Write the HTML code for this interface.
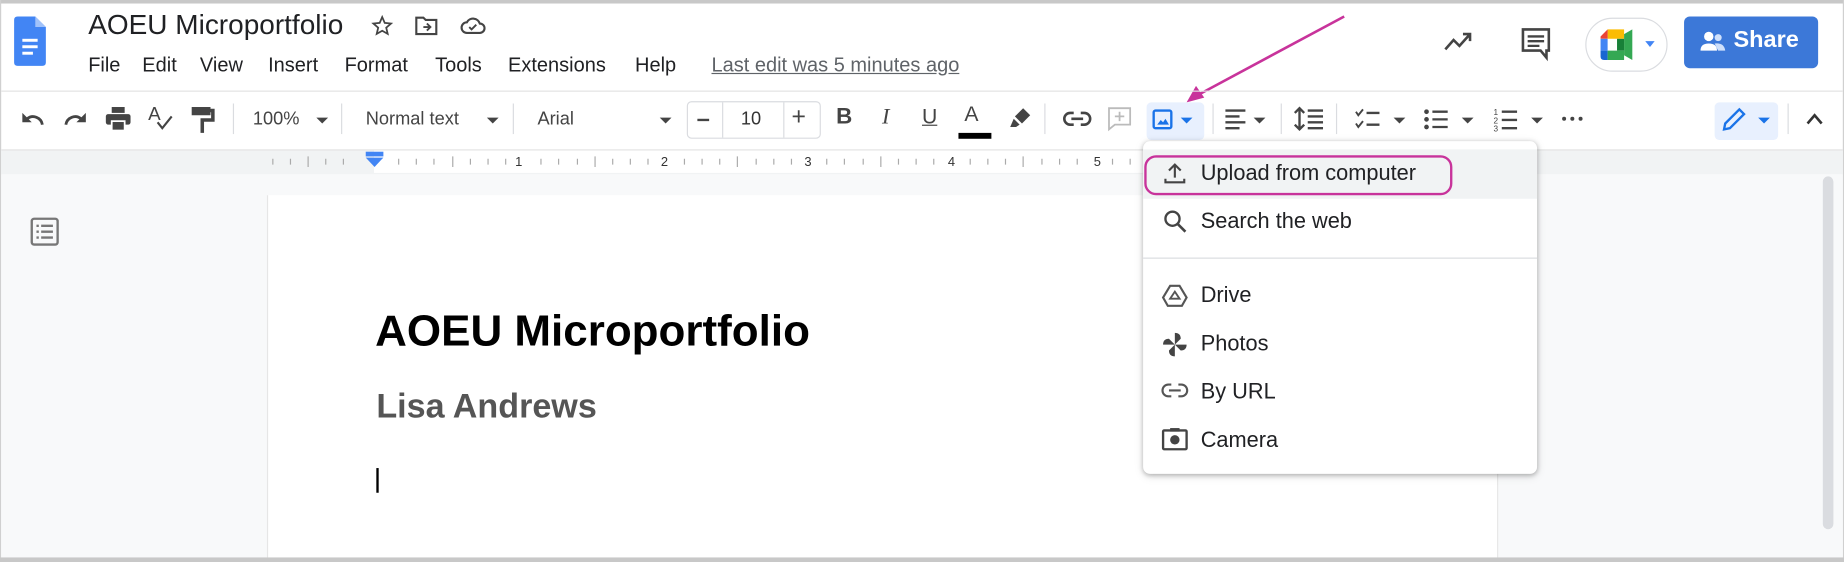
<!DOCTYPE html>
<html><head><meta charset="utf-8"><style>
html,body{margin:0;padding:0;width:1844px;height:562px;overflow:hidden;background:#fff}
#w{position:absolute;left:0;top:0;width:1568px;height:478px;transform:scale(1.17602);transform-origin:0 0;font-family:"Liberation Sans",Arial,sans-serif;color:#202124;background:#fff}
.a{position:absolute}
.t{position:absolute;white-space:nowrap}
.sep{position:absolute;top:88px;width:1px;height:26px;background:#dadce0}
.dd{position:absolute;width:0;height:0;border-left:5px solid transparent;border-right:5px solid transparent;border-top:5px solid #444}
.mi{position:absolute;left:1021px;font-size:18.5px;color:#202124;white-space:nowrap}
svg{position:absolute;overflow:visible}
.m{position:absolute;top:46px;font-size:17px;white-space:nowrap}
</style></head><body><div id="w">
<div class="a" style="left:0;top:0;width:1568px;height:3px;background:#c8c8c8"></div>
<div class="a" style="left:0;top:0;width:1px;height:478px;background:#d0d0d0"></div>
<div class="a" style="right:0;top:0;width:1px;height:478px;background:#d0d0d0"></div>
<svg style="left:12px;top:14px" width="27" height="42" viewBox="0 0 27 42"><path d="M3 0H18L27 9V39Q27 42 24 42H3Q0 42 0 39V3Q0 0 3 0Z" fill="#4285f4"/><path d="M18 0V9H27Z" fill="#a1c2fa"/><rect x="7" y="19" width="13" height="2.5" fill="#fff"/><rect x="7" y="24.5" width="13" height="2.5" fill="#fff"/><rect x="7" y="30" width="9" height="2.5" fill="#fff"/></svg>
<div class="t" style="left:75px;top:8px;font-size:23.8px">AOEU Microportfolio</div>
<svg style="left:315px;top:12px" width="20" height="20" viewBox="0 0 24 24"><path d="M12 3l2.6 6 6.4.6-4.9 4.3 1.5 6.3L12 17l-5.6 3.2 1.5-6.3L3 9.6 9.4 9z" fill="none" stroke="#444" stroke-width="1.8"/></svg>
<svg style="left:353px;top:13px" width="20" height="18" viewBox="0 0 20 18"><path d="M1 2h6l2 2h9v12H1z" fill="none" stroke="#444" stroke-width="1.8"/><path d="M7 10h6M10 7l3 3-3 3" fill="none" stroke="#444" stroke-width="1.6"/></svg>
<svg style="left:391px;top:12px" width="22" height="18" viewBox="0 0 22 18"><path d="M6 16h11a4 4 0 0 0 0-8 6 6 0 0 0-11-1 4.5 4.5 0 0 0 0 9z" fill="none" stroke="#444" stroke-width="1.8"/><path d="M8 11l2 2 4-4" fill="none" stroke="#444" stroke-width="1.6"/></svg>
<div class="m" style="left:75px">File</div>
<div class="m" style="left:121px">Edit</div>
<div class="m" style="left:170px">View</div>
<div class="m" style="left:228px">Insert</div>
<div class="m" style="left:293px">Format</div>
<div class="m" style="left:370px">Tools</div>
<div class="m" style="left:432px">Extensions</div>
<div class="m" style="left:540px">Help</div>
<div class="m" style="left:605px;color:#5f6368;text-decoration:underline">Last edit was 5 minutes ago</div>
<svg style="left:1228px;top:26px" width="26" height="18" viewBox="0 0 26 18"><path d="M1 16l7-8 5 5 9-10M16 3h6v6" fill="none" stroke="#444" stroke-width="2.2"/></svg>
<svg style="left:1293px;top:23px" width="26" height="28" viewBox="0 0 26 28"><path d="M2 2h22v18h-2v6l-5-6H2z" fill="none" stroke="#444" stroke-width="2.2"/><path d="M6 8h14M6 12h14M6 16h10" stroke="#444" stroke-width="2"/></svg>
<div class="a" style="left:1348px;top:15px;width:68px;height:44px;border:1px solid #dadce0;border-radius:23px;background:#fff"></div>
<svg style="left:1361px;top:25px" width="34" height="26" viewBox="0 0 34 26"><path d="M6 0h14v8H6z" fill="#fbbc04"/><path d="M0 6L6 0v8H0z" fill="#ea4335"/><path d="M0 8h6v10H0z" fill="#4285f4"/><path d="M0 18h6v8H3Q0 26 0 23z" fill="#1967d2"/><path d="M6 18h14v8H6z" fill="#34a853"/><path d="M20 4l7-4v26l-7-4z" fill="#34a853"/><path d="M14 8h6v10h-6z" fill="#188038"/></svg>
<div class="dd" style="left:1399px;top:35px;border-top-color:#4285f4;border-width:5px 4px 0"></div>
<div class="a" style="left:1432px;top:14px;width:114px;height:44px;background:#3c78d8;border-radius:5px"></div>
<svg style="left:1446px;top:26px" width="22" height="18" viewBox="0 0 22 18"><circle cx="7" cy="5" r="4" fill="#fff"/><path d="M0 17q0-6 7-6t7 6z" fill="#fff"/><circle cx="15" cy="6" r="3" fill="#cfe0fb"/><path d="M12 11q8-1 9 6h-6z" fill="#cfe0fb"/></svg>
<div class="t" style="left:1474px;top:23px;font-size:20px;color:#fff;font-weight:bold">Share</div>
<svg style="left:0;top:0" width="1568" height="120"><line x1="1143" y1="14" x2="1020" y2="80" stroke="#c8339b" stroke-width="2.2"/><path d="M1009 87l8-14 7 10z" fill="#c8339b"/></svg>
<div class="a" style="left:1px;top:77px;width:1566px;height:1px;background:#e3e3e3"></div>
<svg style="left:18px;top:93px" width="20" height="14" viewBox="0 0 20 14"><path d="M18 13a8 8 0 0 0-13-5" fill="none" stroke="#444" stroke-width="2.4"/><path d="M1 3v8h8z" fill="#444"/></svg>
<svg style="left:54px;top:93px" width="20" height="14" viewBox="0 0 20 14"><path d="M2 13a8 8 0 0 1 13-5" fill="none" stroke="#444" stroke-width="2.4"/><path d="M19 3v8h-8z" fill="#444"/></svg>
<svg style="left:90px;top:91px" width="21" height="20" viewBox="0 0 21 20"><rect x="5" y="0" width="11" height="5" fill="#444"/><rect x="0" y="6" width="21" height="9" rx="2" fill="#444"/><rect x="5" y="12" width="11" height="8" fill="#444" stroke="#fff" stroke-width="1.5"/></svg>
<div class="t" style="left:126px;top:89px;font-size:16px;color:#444">A</div>
<svg style="left:133px;top:98px" width="14" height="14"><path d="M1 6l4 5 8-10" fill="none" stroke="#444" stroke-width="1.8"/></svg>
<svg style="left:163px;top:91px" width="18" height="22" viewBox="0 0 18 22"><rect x="0" y="0" width="16" height="7" fill="#444"/><path d="M16 3h2v8h-9v11" fill="none" stroke="#444" stroke-width="3"/></svg>
<div class="sep" style="left:198px"></div>
<div class="t" style="left:215px;top:93px;font-size:15.5px;color:#444">100%</div>
<div class="dd" style="left:269px;top:100px"></div>
<div class="sep" style="left:290px"></div>
<div class="t" style="left:311px;top:93px;font-size:15.5px;color:#444">Normal text</div>
<div class="dd" style="left:414px;top:100px"></div>
<div class="sep" style="left:436px"></div>
<div class="t" style="left:457px;top:93px;font-size:15.5px;color:#444">Arial</div>
<div class="dd" style="left:561px;top:100px"></div>
<div class="a" style="left:584px;top:86px;width:112px;height:30px;border:1px solid #dadce0;border-radius:4px"></div>
<div class="a" style="left:614px;top:87px;width:1px;height:30px;background:#dadce0"></div>
<div class="a" style="left:666px;top:87px;width:1px;height:30px;background:#dadce0"></div>
<div class="a" style="left:593px;top:101px;width:10px;height:2px;background:#444"></div>
<div class="t" style="left:630px;top:93px;font-size:15.5px;color:#333">10</div>
<div class="t" style="left:673px;top:88px;font-size:21px;color:#444">+</div>
<div class="t" style="left:711px;top:89px;font-size:19px;font-weight:bold;color:#444">B</div>
<div class="t" style="left:750px;top:89px;font-size:19px;font-style:italic;font-family:'Liberation Serif',serif;color:#444">I</div>
<div class="t" style="left:784px;top:89px;font-size:18px;text-decoration:underline;color:#444">U</div>
<div class="t" style="left:820px;top:87px;font-size:18px;color:#444">A</div>
<div class="a" style="left:815px;top:113px;width:28px;height:5px;background:#000"></div>
<svg style="left:858px;top:91px" width="20" height="18" viewBox="0 0 20 18"><path d="M12 1l6 6-7 7-6-6z" fill="#444"/><path d="M4 10l5 5-3 2H1z" fill="#444"/></svg>
<div class="sep" style="left:888px"></div>
<svg style="left:904px;top:95px" width="24" height="12" viewBox="0 0 24 12"><path d="M9 1H6a5 5 0 0 0 0 10h3M15 1h3a5 5 0 0 1 0 10h-3M7 6h10" fill="none" stroke="#444" stroke-width="2.2"/></svg>
<svg style="left:942px;top:91px" width="20" height="20" viewBox="0 0 20 20"><path d="M1 1h18v14H6l-5 4z" fill="none" stroke="#bbb" stroke-width="1.5"/><path d="M10 4v8M6 8h8" stroke="#bbb" stroke-width="1.5"/></svg>
<div class="a" style="left:975px;top:87px;width:49px;height:32px;background:#e8f0fe;border-radius:4px"></div>
<svg style="left:980px;top:93px" width="17" height="17" viewBox="0 0 17 17"><rect x="1" y="1" width="15" height="15" rx="1.5" fill="none" stroke="#1a73e8" stroke-width="2"/><path d="M4 13l3-4 2 2 2-3 3 5z" fill="#1a73e8"/></svg>
<div class="dd" style="left:1004px;top:100px;border-top-color:#1a73e8"></div>
<div class="sep" style="left:1031px"></div>
<svg style="left:1042px;top:93px" width="22" height="17" viewBox="0 0 22 17"><path d="M0 1h17M0 6h12M0 11h17M0 16h12" stroke="#444" stroke-width="2"/></svg>
<div class="dd" style="left:1066px;top:100px"></div>
<div class="sep" style="left:1089px"></div>
<svg style="left:1101px;top:91px" width="24" height="20" viewBox="0 0 24 20"><path d="M4 2v16M0 5l4-4 4 4M0 15l4 4 4-4" fill="none" stroke="#444" stroke-width="2"/><path d="M11 3h13M11 8h13M11 13h13M11 18h13" stroke="#444" stroke-width="2"/></svg>
<div class="sep" style="left:1136px"></div>
<svg style="left:1152px;top:92px" width="22" height="18" viewBox="0 0 22 18"><path d="M1 3l2 3 4-5M1 13l2 3 4-5" fill="none" stroke="#444" stroke-width="1.6"/><path d="M10 4h11M10 14h11" stroke="#444" stroke-width="2"/></svg>
<div class="dd" style="left:1185px;top:100px"></div>
<svg style="left:1211px;top:93px" width="20" height="17" viewBox="0 0 20 17"><circle cx="2" cy="2" r="2" fill="#444"/><circle cx="2" cy="8.5" r="2" fill="#444"/><circle cx="2" cy="15" r="2" fill="#444"/><path d="M7 2h13M7 8.5h13M7 15h13" stroke="#444" stroke-width="2"/></svg>
<div class="dd" style="left:1243px;top:100px"></div>
<svg style="left:1270px;top:91px" width="20" height="21" viewBox="0 0 20 21"><text x="0" y="7" font-size="7" fill="#444" font-family="Liberation Sans">1</text><text x="0" y="14" font-size="7" fill="#444" font-family="Liberation Sans">2</text><text x="0" y="21" font-size="7" fill="#444" font-family="Liberation Sans">3</text><path d="M7 4h13M7 11h13M7 18h13" stroke="#444" stroke-width="2"/></svg>
<div class="dd" style="left:1302px;top:100px"></div>
<svg style="left:1328px;top:99px" width="20" height="4"><circle cx="2" cy="2" r="1.7" fill="#444"/><circle cx="9" cy="2" r="1.7" fill="#444"/><circle cx="16" cy="2" r="1.7" fill="#444"/></svg>
<div class="a" style="left:1458px;top:87px;width:54px;height:32px;background:#e8f0fe;border-radius:4px"></div>
<svg style="left:1464px;top:92px" width="22" height="20" viewBox="0 0 22 20"><path d="M2 18l1-5L15 1l4 4L7 17z" fill="none" stroke="#1a73e8" stroke-width="2"/></svg>
<div class="dd" style="left:1495px;top:100px;border-top-color:#1a73e8"></div>
<div class="sep" style="left:1520px"></div>
<svg style="left:1536px;top:96px" width="14" height="10"><path d="M1 9l6-7 6 7" fill="none" stroke="#333" stroke-width="2.2"/></svg>
<div class="a" style="left:1px;top:127px;width:1566px;height:20px;background:#f1f3f4;border-top:1px solid #e3e3e3;border-bottom:1px solid #e3e3e3"></div>
<div class="a" style="left:318px;top:128px;width:955px;height:19px;background:#fff"></div>
<svg style="left:0;top:128px" width="1568" height="19">
<g stroke="#aaa" stroke-width="1">
<path d="M232 7v5M247 7v5M262 5v9M277 7v5M292 7v5M339 7v5M354 7v5M369 7v5M385 5v9M400 7v5M415 7v5M430 7v5M460 7v5M475 7v5M491 7v5M506 5v9M521 7v5M536 7v5M551 7v5M582 7v5M597 7v5M612 7v5M627 5v9M643 7v5M658 7v5M673 7v5M703 7v5M718 7v5M734 7v5M749 5v9M764 7v5M779 7v5M794 7v5M825 7v5M840 7v5M855 7v5M870 5v9M886 7v5M901 7v5M916 7v5M946 7v5M961 7v5"/></g>
<text x="438" y="13" font-size="11" fill="#333" font-family="Liberation Sans">1</text>
<text x="562" y="13" font-size="11" fill="#333" font-family="Liberation Sans">2</text>
<text x="684" y="13" font-size="11" fill="#333" font-family="Liberation Sans">3</text>
<text x="806" y="13" font-size="11" fill="#333" font-family="Liberation Sans">4</text>
<text x="930" y="13" font-size="11" fill="#333" font-family="Liberation Sans">5</text>
<rect x="311" y="1" width="15" height="4" fill="#4285f4"/><path d="M311 6h15l-7.5 8z" fill="#4285f4"/>
</svg>
<div class="a" style="left:1px;top:148px;width:1566px;height:326px;background:#f8f9fa"></div>
<div class="a" style="left:227px;top:166px;width:1045px;height:308px;background:#fff;border-left:1px solid #e6e6e6;border-right:1px solid #e6e6e6"></div>
<svg style="left:26px;top:185px" width="24" height="24" viewBox="0 0 24 24"><rect x="1" y="1" width="22" height="22" rx="2" fill="none" stroke="#777" stroke-width="2"/><path d="M5 7h2M9 7h10M5 12h2M9 12h10M5 17h2M9 17h10" stroke="#777" stroke-width="2"/></svg>
<div class="a" style="left:1550px;top:150px;width:9px;height:300px;background:#dadce0;border-radius:5px"></div>
<div class="t" style="left:319px;top:260px;font-size:37.4px;font-weight:bold;color:#000">AOEU Microportfolio</div>
<div class="t" style="left:320px;top:330px;font-size:29px;font-weight:bold;color:#555">Lisa Andrews</div>
<div class="a" style="left:320px;top:398px;width:2px;height:21px;background:#000"></div>
<div class="a" style="left:0;top:474px;width:1568px;height:4px;background:#c8c8c8"></div>
<div class="a" style="left:972px;top:120px;width:335px;height:283px;background:#fff;border-radius:6px;box-shadow:0 1px 4px rgba(0,0,0,.25),0 2px 8px rgba(0,0,0,.1)"></div>
<div class="a" style="left:972px;top:127px;width:335px;height:42px;background:#f1f3f4"></div>
<div class="a" style="left:973px;top:132px;width:258px;height:30px;border:2.5px solid #c8339b;border-radius:10px"></div>
<svg style="left:989px;top:137px" width="20" height="20" viewBox="0 0 20 20"><path d="M10 14V3M5 8l5-5 5 5M2 15v3h16v-3" fill="none" stroke="#444" stroke-width="1.8"/></svg>
<div class="mi" style="top:136px">Upload from computer</div>
<svg style="left:989px;top:178px" width="20" height="20" viewBox="0 0 20 20"><circle cx="8" cy="8" r="6" fill="none" stroke="#444" stroke-width="2"/><path d="M12.5 12.5L19 19" stroke="#444" stroke-width="2.2"/></svg>
<div class="mi" style="top:177px">Search the web</div>
<div class="a" style="left:972px;top:219px;width:335px;height:1px;background:#dadce0"></div>
<svg style="left:988px;top:241px" width="22" height="20" viewBox="0 0 22 20"><path d="M7 2h8l6 10-4 7H5l-4-7z" fill="none" stroke="#555" stroke-width="1.8"/><path d="M11 7l4 6H7z" fill="none" stroke="#555" stroke-width="1.6"/></svg>
<div class="mi" style="top:240px">Drive</div>
<svg style="left:988px;top:282px" width="22" height="22" viewBox="0 0 22 22"><path d="M11 11V1q5 0 5 5zM11 11h10q0 5-5 5zM11 11v10q-5 0-5-5zM11 11H1q0-5 5-5z" fill="#444"/></svg>
<div class="mi" style="top:281px">Photos</div>
<svg style="left:988px;top:326px" width="22" height="12" viewBox="0 0 22 12"><path d="M8 1H5.5a5 5 0 0 0 0 10H8M14 1h2.5a5 5 0 0 1 0 10H14M6 6h10" fill="none" stroke="#555" stroke-width="1.8"/></svg>
<div class="mi" style="top:322px">By URL</div>
<svg style="left:988px;top:363px" width="22" height="20" viewBox="0 0 22 20"><rect x="1" y="3" width="20" height="16" rx="1" fill="none" stroke="#444" stroke-width="2"/><rect x="7" y="1" width="8" height="3" fill="#444"/><circle cx="11" cy="11" r="4" fill="#444"/></svg>
<div class="mi" style="top:363px">Camera</div>
</div></body></html>
